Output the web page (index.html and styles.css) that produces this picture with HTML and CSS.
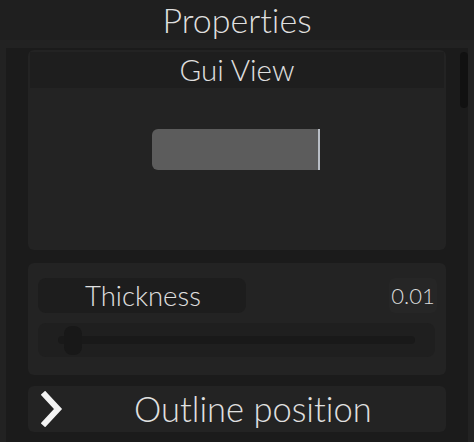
FILE: index.html
```html
<!DOCTYPE html>
<html>
<head>
<meta charset="utf-8">
<link rel="stylesheet" href="styles.css">
</head>
<body>
<div class="window">
  <div class="title">Properties</div>
  <div class="panel">
    <div class="frame">
      <div class="list">
        <div class="card gui">
          <div class="card-head">Gui View</div>
          <div class="gui-body">
            <div class="preview-bar"></div>
            <div class="caret"></div>
          </div>
        </div>
        <div class="card thick">
          <div class="thick-row">
            <div class="label-pill">Thickness</div>
            <div class="value-box">0.01</div>
          </div>
          <div class="slider">
            <div class="track"></div>
            <div class="thumb"></div>
          </div>
        </div>
        <div class="card outline">
          <svg class="chev" width="22" height="36" viewBox="0 0 22 36">
            <path d="M4 4 L17 18 L4 32" fill="none" stroke="#f4f4f4" stroke-width="6" stroke-linecap="square" stroke-linejoin="miter"/>
          </svg>
          <div class="outline-text">Outline position</div>
        </div>
      </div>
      <div class="scrollbar"></div>
    </div>
  </div>
</div>
</body>
</html>
```
FILE: styles.css
```css
html, body {
  margin: 0;
  padding: 0;
  background: #1f1f1f;
  width: 474px;
  height: 442px;
  overflow: hidden;
  font-family: Lato, "Open Sans", sans-serif;
  font-weight: 300;
  font-variant-ligatures: none;
}
.window {
  width: 474px;
  height: 442px;
  display: flex;
  flex-direction: column;
}
.title {
  height: 40px;
  line-height: 40px;
  text-align: center;
  font-size: 34px;
  color: #dedede;
  background: #1f1f1f;
  position: relative;
  z-index: 1;
}
.panel {
  flex: 1;
  background: #222222;
  padding: 8px 6px 0 6px;
  display: flex;
}
.frame {
  flex: 1;
  background: #1b1b1b;
  position: relative;
  display: flex;
}
.list {
  margin-left: 22px;
  width: 418px;
  padding-top: 2px;
  display: flex;
  flex-direction: column;
}
.card {
  background: #232323;
  border-radius: 6px;
}
.gui {
  height: 200px;
  padding: 2px 2px 0 2px;
  box-sizing: border-box;
  display: flex;
  flex-direction: column;
}
.card-head {
  height: 36px;
  background: #1e1e1e;
  color: #e0e0e0;
  font-size: 29.5px;
  line-height: 35px;
  text-align: center;
}
.gui-body {
  flex: 1;
  display: flex;
  align-items: flex-start;
  padding-top: 41px;
  padding-left: 122px;
}
.preview-bar {
  width: 166px;
  height: 41px;
  background: #5c5c5c;
  border-radius: 6px 0 0 6px;
}
.caret {
  width: 2px;
  height: 41px;
  background: #b9bec6;
}
.thick {
  margin-top: 13px;
  height: 112px;
  padding: 15px 9px 0 10px;
  box-sizing: border-box;
}
.thick-row {
  display: flex;
  justify-content: space-between;
  align-items: center;
  height: 35px;
}
.label-pill {
  width: 208px;
  height: 35px;
  background: #1d1d1d;
  border-radius: 8px;
  color: #e0e0e0;
  font-size: 27.5px;
  line-height: 35px;
  padding-left: 47px;
  box-sizing: border-box;
}
.value-box {
  width: 48px;
  height: 35px;
  background: #262626;
  border-radius: 6px;
  color: #dcdcdc;
  font-size: 22px;
  line-height: 36px;
  text-align: center;
}
.slider {
  margin-top: 10px;
  width: 397px;
  height: 34px;
  background: #1f1f1f;
  border-radius: 8px;
  position: relative;
}
.track {
  position: absolute;
  left: 20px;
  right: 20px;
  top: 13px;
  height: 8px;
  background: #191919;
  border-radius: 4px;
}
.thumb {
  position: absolute;
  left: 26px;
  top: 3px;
  width: 18px;
  height: 29px;
  background: #181818;
  border-radius: 8px;
}
.outline {
  margin-top: 11px;
  height: 46px;
  display: flex;
  align-items: center;
}
.chev {
  margin-left: 13px;
  display: block;
}
.outline-text {
  margin-left: 71px;
  color: #e0e0e0;
  font-size: 34.5px;
  line-height: 46px;
}
.scrollbar {
  position: absolute;
  right: 0;
  top: 4px;
  width: 8px;
  height: 56px;
  background: #111111;
  border-radius: 4px;
}
```
